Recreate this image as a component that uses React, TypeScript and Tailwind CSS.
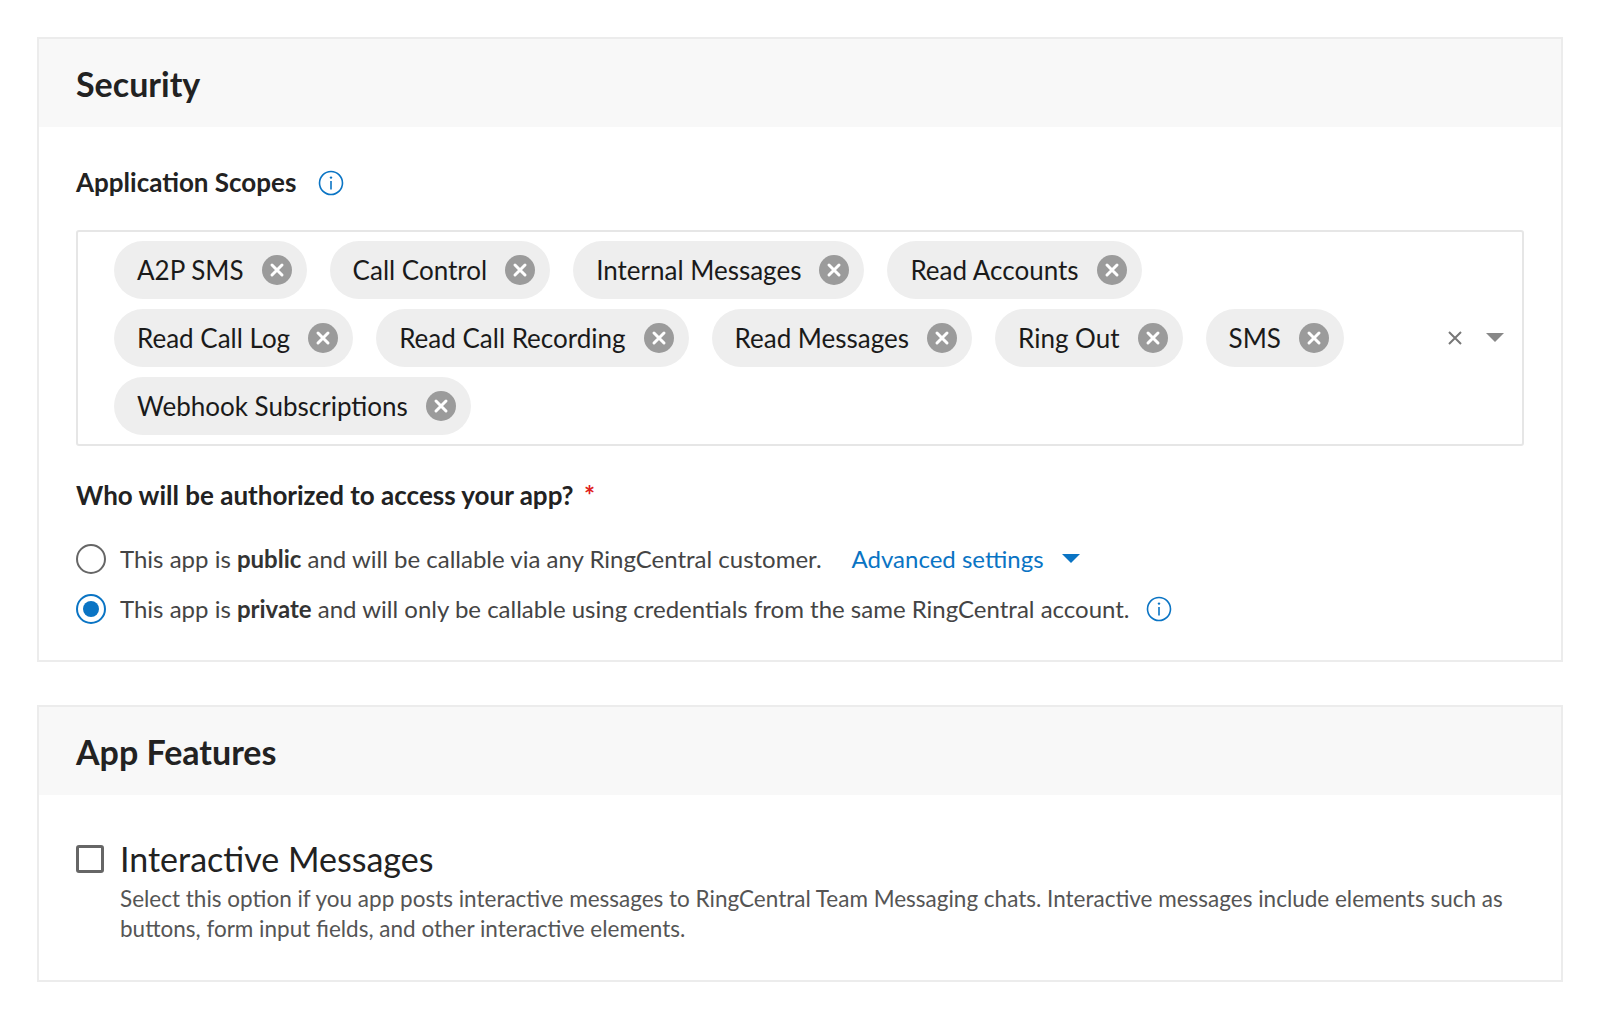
import React from "react";

const scopes = [
	"A2P SMS",
	"Call Control",
	"Internal Messages",
	"Read Accounts",
	"Read Call Log",
	"Read Call Recording",
	"Read Messages",
	"Ring Out",
	"SMS",
	"Webhook Subscriptions",
];

function InfoIcon() {
	return (
		<svg width="26" height="26" viewBox="0 0 26 26" fill="none">
			<circle cx="13" cy="13" r="11.5" stroke="#0a74c4" strokeWidth="1.6" />
			<circle cx="13" cy="7.6" r="1.2" fill="#0a74c4" />
			<path d="M13 11v8.5" stroke="#0a74c4" strokeWidth="1.6" />
		</svg>
	);
}

function Chip({ label }: { label: string }) {
	return (
		<span className="flex h-[58px] items-center gap-[18px] rounded-full bg-[#eeeeee] pl-[23px] pr-[15px] text-[26px] text-[#1a1a1a]">
			{label}
			<svg width="30" height="30" viewBox="0 0 30 30">
				<circle cx="15" cy="15" r="15" fill="#9b9b9b" />
				<path d="M10 10l10 10M20 10L10 20" stroke="#fff" strokeWidth="3" strokeLinecap="round" />
			</svg>
		</span>
	);
}

export default function App() {
	return (
		<div
			className="min-h-[1017px] bg-white px-[37px] pt-[37px] text-[#333]"
			style={{ fontFamily: "Lato, 'Open Sans', sans-serif" }}
		>
			{/* Security */}
			<section className="border-2 border-[#ececec]">
				<div className="flex h-[88px] items-center bg-[#f8f8f8] px-[37px]">
					<h2 className="text-[34px] font-bold text-[#222]">Security</h2>
				</div>
				<div className="px-[37px] pb-[33px] pt-[36px]">
					<div className="flex items-center gap-[22px]">
						<span className="text-[26px] font-bold text-[#222]">Application Scopes</span>
						<InfoIcon />
					</div>
					<div className="mt-[28px] flex items-center rounded-[3px] border-2 border-[#e6e6e6] py-[9px] pl-[36px] pr-[18px]">
						<div className="flex w-[1260px] flex-wrap gap-x-[23px] gap-y-[10px]">
							{scopes.map((s) => (
								<Chip key={s} label={s} />
							))}
						</div>
						<div className="ml-auto flex items-center gap-[22px]">
							<svg width="18" height="18" viewBox="0 0 18 18">
								<path d="M3 3l12 12M15 3L3 15" stroke="#777" strokeWidth="2" />
							</svg>
							<svg width="18" height="10" viewBox="0 0 18 10">
								<path d="M0 0h18L9 9z" fill="#888" />
							</svg>
						</div>
					</div>
					<div className="mt-[30px] text-[26px] font-bold text-[#222]">
						Who will be authorized to access your app? <span className="ml-1 text-[#e02020]">*</span>
					</div>
					<div className="mt-[26px] flex flex-col gap-[14px] text-[24px] text-[#444]">
						<label className="flex items-center">
							<span className="h-[30px] w-[30px] rounded-full border-2 border-[#666]" />
							<span className="ml-[14px]">
								This app is <b className="text-[#333]">public</b> and will be callable via any RingCentral customer.
							</span>
							<span className="ml-[30px] text-[#0a74c4]">Advanced settings</span>
							<svg className="ml-[18px]" width="18" height="10" viewBox="0 0 18 10">
								<path d="M0 0h18L9 9z" fill="#0a74c4" />
							</svg>
						</label>
						<label className="flex items-center">
							<span className="flex h-[30px] w-[30px] items-center justify-center rounded-full border-2 border-[#0a74c4]">
								<span className="h-[16px] w-[16px] rounded-full bg-[#0a74c4]" />
							</span>
							<span className="ml-[14px]">
								This app is <b className="text-[#333]">private</b> and will only be callable using credentials from the same RingCentral account.
							</span>
							<span className="ml-[16px]">
								<InfoIcon />
							</span>
						</label>
					</div>
				</div>
			</section>

			{/* App Features */}
			<section className="mt-[43px] border-2 border-[#ececec]">
				<div className="flex h-[88px] items-center bg-[#f8f8f8] px-[37px]">
					<h2 className="text-[34px] font-bold text-[#222]">App Features</h2>
				</div>
				<div className="px-[37px] pb-[36px] pt-[38px]">
					<label className="flex items-center">
						<span className="h-[28px] w-[28px] rounded-[3px] border-[3px] border-[#666]" />
						<span className="ml-[16px] text-[34px] text-[#222]">Interactive Messages</span>
					</label>
					<p className="ml-[44px] text-[22.5px] leading-[30px] text-[#555]">
						Select this option if you app posts interactive messages to RingCentral Team Messaging chats. Interactive messages include elements such as buttons, form input fields, and other interactive elements.
					</p>
				</div>
			</section>
		</div>
	);
}
